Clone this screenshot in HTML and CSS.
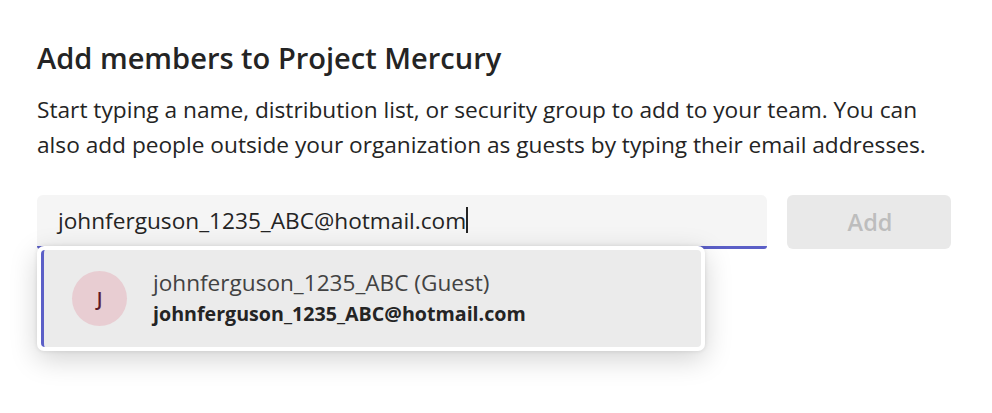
FILE: index.html
```html
<!DOCTYPE html>
<html lang="en">
<head>
<meta charset="utf-8">
<title>Add members</title>
<link rel="stylesheet" href="styles.css">
</head>
<body>
<main class="dialog">
<h1 class="title">Add members to Project Mercury</h1>
<p class="desc">Start typing a name, distribution list, or security group to add to your team. You can also add people outside your organization as guests by typing their email addresses.</p>
<div class="row">
<div class="field">
<div class="input"><span>johnferguson_1235_ABC@hotmail.com</span><i class="caret"></i></div>
<div class="menu">
<div class="option">
<div class="avatar">J</div>
<div class="info">
<div class="name">johnferguson_1235_ABC (Guest)</div>
<div class="mail">johnferguson_1235_ABC@hotmail.com</div>
</div>
</div>
</div>
</div>
<button class="add">Add</button>
</div>
</main>
</body>
</html>
```
FILE: styles.css
```css
html, body { margin: 0; height: 100%; background: #fff; overflow: hidden; }
body { font-family: "Open Sans", "Noto Sans", sans-serif; color: #242424; }
.dialog { padding: 39px 41px 0 37px; }
.title { margin: 0; font-size: 29.05px; line-height: 38px; font-weight: 600; }
.desc { margin: 15px 0 0; font-size: 22.68px; line-height: 35px; width: 900px; }
.row { display: flex; gap: 20px; margin-top: 33px; }
.field { position: relative; width: 730px; }
.input { box-sizing: border-box; height: 54px; background: #f5f5f5; border-bottom: 3px solid #5b5fc7; border-radius: 6px 6px 3px 3px; padding: 0 0 1px 21px; display: flex; align-items: center; font-size: 22.65px; }
.caret { width: 2px; height: 26px; background: #242424; }
.menu { position: absolute; left: 0; top: 51px; box-sizing: border-box; width: 668px; padding: 4px; background: #fff; border-radius: 7px; box-shadow: 0 8px 28px rgba(0,0,0,.18), 0 0 4px rgba(0,0,0,.1); }
.option { box-sizing: border-box; height: 97px; background: #ebebeb; border-left: 3px solid #5b5fc7; border-radius: 4px; display: flex; align-items: center; padding-left: 28px; gap: 26px; }
.avatar { width: 55px; height: 55px; border-radius: 50%; background: #e8cdd2; color: #5c1a2a; display: flex; align-items: center; justify-content: center; font-size: 19px; font-weight: 600; }
.info { padding-bottom: 3px; }
.name { font-size: 22.6px; line-height: 33px; color: #424242; }
.mail { font-size: 19.65px; line-height: 30px; font-weight: 700; }
.add { width: 164px; height: 54px; border: 0; border-radius: 6px; background: #e9e9e9; color: #bdbdbd; font: 600 23.5px "Open Sans", sans-serif; padding: 0 0 0 2px; }
```
